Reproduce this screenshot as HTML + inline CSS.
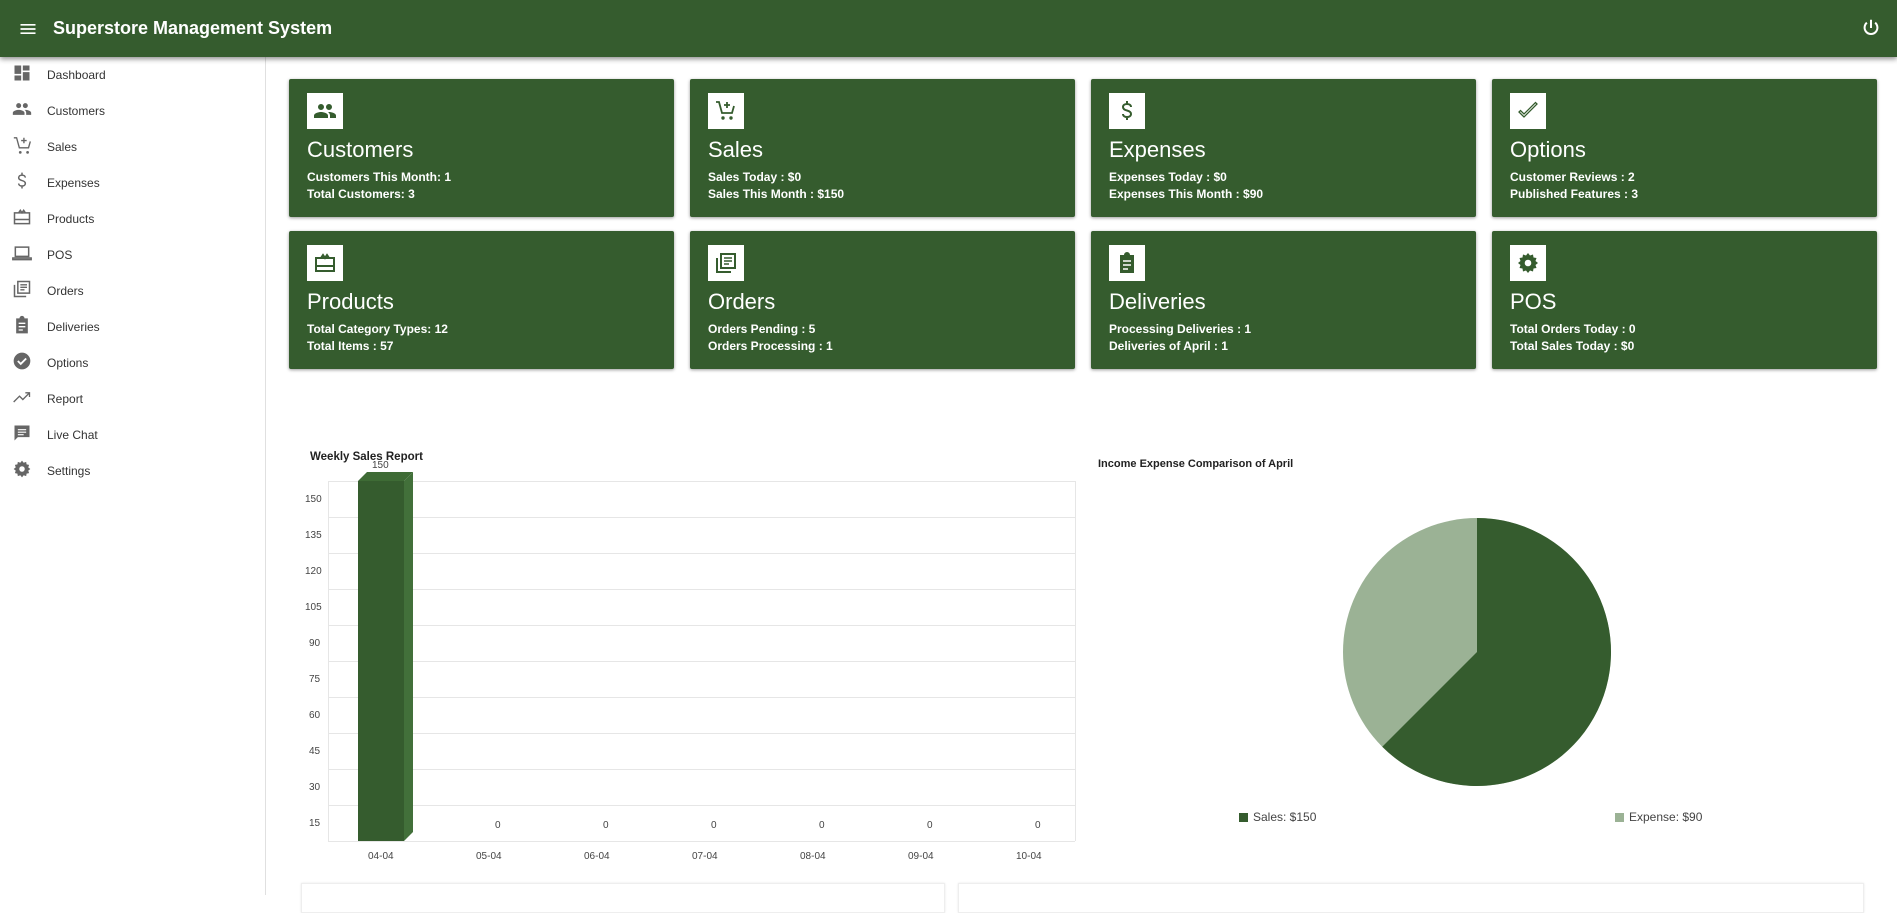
<!DOCTYPE html>
<html><head><meta charset="utf-8"><style>
*{margin:0;padding:0;box-sizing:border-box}
body{width:1897px;height:895px;overflow:hidden;background:#fff;font-family:"Liberation Sans",sans-serif;position:relative}
.hdr{position:absolute;left:0;top:0;width:1897px;height:57px;background:#355c2e;box-shadow:0 2px 5px rgba(0,0,0,.45);z-index:2}
.hdr .t{position:absolute;left:53px;top:18px;color:#fff;font-size:18px;font-weight:bold}
.side{position:absolute;left:0;top:57px;width:266px;height:838px;border-right:1px solid #e0e0e0}
.si{position:absolute;left:0;height:36px;width:266px}
.si svg{position:absolute;left:12px;top:6px}
.si span{position:absolute;left:47px;top:11px;font-size:12px;color:#333}
.card{position:absolute;width:385px;height:138px;background:#355c2e;box-shadow:0 1px 3px rgba(0,0,0,.4);border-radius:2px;color:#fff}
.card .ib{position:absolute;left:18px;top:14px;width:36px;height:36px;background:#fff}
.card .ib svg{position:absolute;left:6px;top:6px}
.card h2{position:absolute;left:18px;top:58px;font-size:22px;font-weight:normal}
.card p{position:absolute;left:18px;font-size:12px;font-weight:bold}
.ax{position:absolute;font-size:10px;color:#444}
.gl{position:absolute;left:328px;width:747px;height:1px;background:#e6e6e6}
</style></head><body>
<div class="hdr">
<svg style="position:absolute;left:18px;top:19px" width="20" height="20" viewBox="0 0 24 24"><path d="M3 6h18v2H3zm0 5h18v2H3zm0 5h18v2H3z" fill="#fff"/></svg>
<div class="t">Superstore Management System</div>
<svg style="position:absolute;left:1860px;top:17px" width="22" height="22" viewBox="0 0 24 24"><path d="M12 3v9M7.5 6.2A7 7 0 1 0 16.5 6.2" stroke="#fff" stroke-width="2.2" fill="none"/></svg>
</div>
<div class="side">
<div class="si" style="top:0"><svg width="20" height="20" viewBox="0 0 24 24"><path d="M3 13h8V3H3zm0 8h8v-6H3zm10 0h8V11h-8zm0-18v6h8V3z" fill="#666"/></svg><span>Dashboard</span></div>
<div class="si" style="top:36px"><svg width="20" height="20" viewBox="0 0 24 24"><path d="M16 11a3 3 0 1 0 0-6 3 3 0 0 0 0 6zm-8 0a3 3 0 1 0 0-6 3 3 0 0 0 0 6zm0 2c-2.3 0-7 1.2-7 3.5V19h14v-2.5C15 14.2 10.3 13 8 13zm8 0c-.3 0-.6 0-1 .1 1.2.8 2 2 2 3.4V19h6v-2.5c0-2.3-4.7-3.5-7-3.5z" fill="#666"/></svg><span>Customers</span></div>
<div class="si" style="top:72px"><svg width="22" height="22" viewBox="0 0 24 24"><path d="M2 3h3l3 11h10l2-7M13 3v6M10 6h6" stroke="#666" stroke-width="1.5" fill="none"/><circle cx="9" cy="19" r="1.5" fill="#666"/><circle cx="17" cy="19" r="1.5" fill="#666"/></svg><span>Sales</span></div>
<div class="si" style="top:108px"><svg width="20" height="20" viewBox="0 0 24 24"><path d="M16 8c0-2-2-3-4-3s-4 1-4 3 2 3 4 3.5 4 1.5 4 3.5-2 3-4 3-4-1-4-3M12 2v3M12 18v3" stroke="#666" stroke-width="1.8" fill="none"/></svg><span>Expenses</span></div>
<div class="si" style="top:144px"><svg width="20" height="20" viewBox="0 0 24 24"><path d="M3 7h18v13H3zM3 15h18M8 7l2-3 2 3 2-3 2 3" stroke="#666" stroke-width="1.8" fill="none"/></svg><span>Products</span></div>
<div class="si" style="top:180px"><svg width="20" height="20" viewBox="0 0 24 24"><path d="M4 5h16v11H4zM1 18h22v2H1z" stroke="#666" stroke-width="1.8" fill="none"/></svg><span>POS</span></div>
<div class="si" style="top:216px"><svg width="20" height="20" viewBox="0 0 24 24"><path d="M7 3h14v14H7zM3 7v14h14" stroke="#666" stroke-width="1.8" fill="none"/><path d="M10 7h8M10 10h8M10 13h5" stroke="#666" stroke-width="1.6"/></svg><span>Orders</span></div>
<div class="si" style="top:252px"><svg width="20" height="20" viewBox="0 0 24 24"><path d="M5 4h4a3 3 0 0 1 6 0h4v18H5z" fill="#666"/><path d="M8 10h8M8 14h8M8 18h5" stroke="#fff" stroke-width="1.6"/></svg><span>Deliveries</span></div>
<div class="si" style="top:288px"><svg width="20" height="20" viewBox="0 0 24 24"><circle cx="12" cy="12" r="10" fill="#666"/><path d="M7 12l3.5 3.5L17 9" stroke="#fff" stroke-width="2.2" fill="none"/></svg><span>Options</span></div>
<div class="si" style="top:324px"><svg width="20" height="20" viewBox="0 0 24 24"><path d="M2 18l7-7 4 4 8-8M16 7h5v5" stroke="#666" stroke-width="1.6" fill="none"/></svg><span>Report</span></div>
<div class="si" style="top:360px"><svg width="20" height="20" viewBox="0 0 24 24"><path d="M3 3h18v14H7l-4 4z" fill="#666"/><path d="M7 8h10M7 11h10M7 14h7" stroke="#fff" stroke-width="1.4"/></svg><span>Live Chat</span></div>
<div class="si" style="top:396px"><svg width="20" height="20" viewBox="0 0 24 24"><path d="M12 2l2 2.5 3-1 .5 3 3 .5-1 3L22 12l-2.5 2 1 3-3 .5-.5 3-3-1L12 22l-2-2.5-3 1-.5-3-3-.5 1-3L2 12l2.5-2-1-3 3-.5.5-3 3 1z" fill="#666"/><circle cx="12" cy="12" r="3.3" fill="#fff"/></svg><span>Settings</span></div>
</div>

<div class="card" style="left:289px;top:79px"><div class="ib"><svg width="24" height="24" viewBox="0 0 24 24"><path d="M16 11a3 3 0 1 0 0-6 3 3 0 0 0 0 6zm-8 0a3 3 0 1 0 0-6 3 3 0 0 0 0 6zm0 2c-2.3 0-7 1.2-7 3.5V19h14v-2.5C15 14.2 10.3 13 8 13zm8 0c-.3 0-.6 0-1 .1 1.2.8 2 2 2 3.4V19h6v-2.5c0-2.3-4.7-3.5-7-3.5z" fill="#355c2e"/></svg></div><h2>Customers</h2><p style="top:91px">Customers This Month: 1</p><p style="top:108px">Total Customers: 3</p></div>
<div class="card" style="left:690px;top:79px"><div class="ib"><svg width="24" height="24" viewBox="0 0 24 24"><path d="M2 3h3l3 11h10l2-7M13 3v6M10 6h6" stroke="#355c2e" stroke-width="1.8" fill="none"/><circle cx="9" cy="19" r="1.7" fill="#355c2e"/><circle cx="17" cy="19" r="1.7" fill="#355c2e"/></svg></div><h2>Sales</h2><p style="top:91px">Sales Today : $0</p><p style="top:108px">Sales This Month : $150</p></div>
<div class="card" style="left:1091px;top:79px"><div class="ib"><svg width="24" height="24" viewBox="0 0 24 24"><path d="M16 8c0-2-2-3-4-3s-4 1-4 3 2 3 4 3.5 4 1.5 4 3.5-2 3-4 3-4-1-4-3M12 2v3M12 18v3" stroke="#355c2e" stroke-width="2" fill="none"/></svg></div><h2>Expenses</h2><p style="top:91px">Expenses Today : $0</p><p style="top:108px">Expenses This Month : $90</p></div>
<div class="card" style="left:1492px;top:79px"><div class="ib"><svg width="24" height="24" viewBox="0 0 24 24"><path d="M3 13l5 5L21 5l-1.5-1.5L8 15l-3.5-3.5z" stroke="#355c2e" stroke-width="1.3" fill="none"/></svg></div><h2>Options</h2><p style="top:91px">Customer Reviews : 2</p><p style="top:108px">Published Features : 3</p></div>
<div class="card" style="left:289px;top:231px"><div class="ib"><svg width="24" height="24" viewBox="0 0 24 24"><path d="M3 7h18v13H3zM3 15h18M8 7l2-3 2 3 2-3 2 3" stroke="#355c2e" stroke-width="2" fill="none"/></svg></div><h2>Products</h2><p style="top:91px">Total Category Types: 12</p><p style="top:108px">Total Items : 57</p></div>
<div class="card" style="left:690px;top:231px"><div class="ib"><svg width="24" height="24" viewBox="0 0 24 24"><path d="M7 3h14v14H7zM3 7v14h14" stroke="#355c2e" stroke-width="2" fill="none"/><path d="M10 7h8M10 10h8M10 13h5" stroke="#355c2e" stroke-width="1.6"/></svg></div><h2>Orders</h2><p style="top:91px">Orders Pending : 5</p><p style="top:108px">Orders Processing : 1</p></div>
<div class="card" style="left:1091px;top:231px"><div class="ib"><svg width="24" height="24" viewBox="0 0 24 24"><path d="M5 4h4a3 3 0 0 1 6 0h4v18H5z" fill="#355c2e"/><path d="M8 10h8M8 14h8M8 18h5" stroke="#fff" stroke-width="1.6"/></svg></div><h2>Deliveries</h2><p style="top:91px">Processing Deliveries : 1</p><p style="top:108px">Deliveries of April : 1</p></div>
<div class="card" style="left:1492px;top:231px"><div class="ib"><svg width="24" height="24" viewBox="0 0 24 24"><path d="M12 2l2 2.5 3-1 .5 3 3 .5-1 3L22 12l-2.5 2 1 3-3 .5-.5 3-3-1L12 22l-2-2.5-3 1-.5-3-3-.5 1-3L2 12l2.5-2-1-3 3-.5.5-3 3 1z" fill="#355c2e"/><circle cx="12" cy="12" r="3.3" fill="#fff"/></svg></div><h2>POS</h2><p style="top:91px">Total Orders Today : 0</p><p style="top:108px">Total Sales Today : $0</p></div>

<div style="position:absolute;left:310px;top:451px;font-size:11.5px;font-weight:bold;color:#222">Weekly Sales Report</div>
<div class="gl" style="top:481px"></div><div class="gl" style="top:517px"></div><div class="gl" style="top:553px"></div><div class="gl" style="top:589px"></div><div class="gl" style="top:625px"></div><div class="gl" style="top:661px"></div><div class="gl" style="top:697px"></div><div class="gl" style="top:733px"></div><div class="gl" style="top:769px"></div><div class="gl" style="top:805px"></div><div class="gl" style="top:841px"></div>
<div style="position:absolute;left:328px;top:481px;width:1px;height:360px;background:#e6e6e6"></div>
<div style="position:absolute;left:1075px;top:481px;width:1px;height:360px;background:#e6e6e6"></div>
<div class="ax" style="left:305px;top:494px">150</div><div class="ax" style="left:305px;top:530px">135</div><div class="ax" style="left:305px;top:566px">120</div><div class="ax" style="left:305px;top:602px">105</div><div class="ax" style="left:309px;top:638px">90</div><div class="ax" style="left:309px;top:674px">75</div><div class="ax" style="left:309px;top:710px">60</div><div class="ax" style="left:309px;top:746px">45</div><div class="ax" style="left:309px;top:782px">30</div><div class="ax" style="left:309px;top:818px">15</div>
<svg style="position:absolute;left:350px;top:465px" width="70" height="380"><polygon points="8,16 17,7 63,7 54,16" fill="#3e6b35"/><polygon points="54,16 63,7 63,367 54,376" fill="#42703a"/><rect x="8" y="16" width="46" height="360" fill="#355c2e"/></svg>
<div class="ax" style="left:372px;top:460px">150</div>
<div class="ax" style="left:495px;top:820px">0</div><div class="ax" style="left:603px;top:820px">0</div><div class="ax" style="left:711px;top:820px">0</div><div class="ax" style="left:819px;top:820px">0</div><div class="ax" style="left:927px;top:820px">0</div><div class="ax" style="left:1035px;top:820px">0</div>
<div class="ax" style="left:368px;top:851px">04-04</div><div class="ax" style="left:476px;top:851px">05-04</div><div class="ax" style="left:584px;top:851px">06-04</div><div class="ax" style="left:692px;top:851px">07-04</div><div class="ax" style="left:800px;top:851px">08-04</div><div class="ax" style="left:908px;top:851px">09-04</div><div class="ax" style="left:1016px;top:851px">10-04</div>

<div style="position:absolute;left:1098px;top:458px;font-size:11px;font-weight:bold;color:#222">Income Expense Comparison of April</div>
<svg style="position:absolute;left:1340px;top:515px" width="274" height="274" viewBox="0 0 274 274"><circle cx="137" cy="137" r="134" fill="#9bb295"/><path d="M137 137L137 3A134 134 0 1 1 42.25 231.75Z" fill="#355c2e"/></svg>
<div style="position:absolute;left:1239px;top:813px;width:9px;height:9px;background:#355c2e"></div>
<div style="position:absolute;left:1253px;top:810px;font-size:12px;color:#444">Sales: $150</div>
<div style="position:absolute;left:1615px;top:813px;width:9px;height:9px;background:#9bb295"></div>
<div style="position:absolute;left:1629px;top:810px;font-size:12px;color:#444">Expense: $90</div>

<div style="position:absolute;left:301px;top:883px;width:644px;height:30px;border:1px solid #eee;box-shadow:0 0 2px rgba(0,0,0,.1)"></div>
<div style="position:absolute;left:958px;top:883px;width:906px;height:30px;border:1px solid #eee;box-shadow:0 0 2px rgba(0,0,0,.1)"></div>
</body></html>
